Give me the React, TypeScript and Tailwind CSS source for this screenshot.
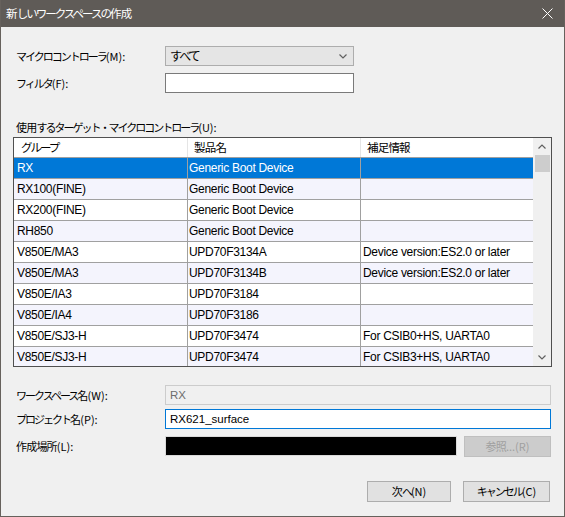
import React from 'react';

const rows = [
  ['RX', 'Generic Boot Device', ''],
  ['RX100(FINE)', 'Generic Boot Device', ''],
  ['RX200(FINE)', 'Generic Boot Device', ''],
  ['RH850', 'Generic Boot Device', ''],
  ['V850E/MA3', 'UPD70F3134A', 'Device version:ES2.0 or later'],
  ['V850E/MA3', 'UPD70F3134B', 'Device version:ES2.0 or later'],
  ['V850E/IA3', 'UPD70F3184', ''],
  ['V850E/IA4', 'UPD70F3186', ''],
  ['V850E/SJ3-H', 'UPD70F3474', 'For CSIB0+HS, UARTA0'],
  ['V850E/SJ3-H', 'UPD70F3474', 'For CSIB3+HS, UARTA0'],
];

// kana packed tight, kanji a little, ascii left alone
const Jp = ({ text }: { text: string }) => {
  const parts = text.match(/[\u4e00-\u9fff]+|[\u3000-\u30ff]+|[^\u3000-\u30ff\u4e00-\u9fff]+/g) ?? [];
  return (
    <span className="whitespace-nowrap">
      {parts.map((p, i) => {
        const kanji = /[\u4e00-\u9fff]/.test(p);
        const kana = /[\u3000-\u30ff]/.test(p);
        return (
          <span
            key={i}
            className={kanji ? 'tracking-[-0.8px]' : kana ? 'tracking-[-2px]' : 'tracking-normal'}
          >
            {p}
          </span>
        );
      })}
    </span>
  );
};

const Chevron = ({ up = false }: { up?: boolean }) => (
  <svg width="8" height="5" viewBox="0 0 8 5" className={up ? 'rotate-180' : ''}>
    <path d="M0.5 0.5 L4 4 L7.5 0.5" fill="none" stroke="#606060" strokeWidth="1.2" />
  </svg>
);

export default function App() {
  return (
    <div className="w-[565px] h-[517px] flex flex-col bg-[#f0f0f0] border-x border-b border-[#66615c] overflow-hidden font-['Noto_Sans_CJK_JP',sans-serif] text-[11px] text-black">
      {/* title bar */}
      <div className="h-[27px] -mx-px bg-[#5f5b57] flex items-center justify-between pl-[6px] pr-[12px] text-white text-[11.5px]">
        <Jp text="新しいワークスペースの作成" />
        <svg width="11" height="11" viewBox="0 0 11 11">
          <path d="M0.5 0.5 L10.5 10.5 M10.5 0.5 L0.5 10.5" stroke="#fff" strokeWidth="1" />
        </svg>
      </div>

      <div className="flex flex-col px-[12px] pt-[19px]">
        <div className="flex items-center h-[20px]">
          <span className="w-[152px] pl-[3px]"><Jp text="マイクロコントローラ(M):" /></span>
          <div className="w-[189px] h-[20px] bg-[#e5e5e5] border border-[#adadad] flex items-center justify-between pl-[4px] pr-[6px] text-[12px]">
            <Jp text="すべて" />
            <Chevron />
          </div>
        </div>

        <div className="flex items-center h-[20px] mt-[7px]">
          <span className="w-[152px] pl-[3px]"><Jp text="フィルタ(F):" /></span>
          <div className="w-[189px] h-[20px] bg-white border border-[#7a7a7a]" />
        </div>

        <div className="mt-[26px] h-[16px] leading-[16px] pl-[3px]">
          <Jp text="使用するターゲット・マイクロコントローラ(U):" />
        </div>

        {/* device list */}
        <div className="mt-[2px] w-[539px] h-[230px] border border-[#505050] bg-white flex overflow-hidden">
          <div className="flex flex-col w-[519px] font-['Liberation_Sans',sans-serif] text-[12px] tracking-[-0.3px]">
            <div className="grid grid-cols-[174px_173px_172px] h-[20px] shrink-0 border-b border-[#a0a0a0] font-['Noto_Sans_CJK_JP',sans-serif] text-[11.5px]">
              <div className="pl-[7px] border-r border-[#e5e5e5] leading-[19px]"><Jp text="グループ" /></div>
              <div className="pl-[6px] border-r border-[#e5e5e5] leading-[19px]"><Jp text="製品名" /></div>
              <div className="pl-[6px] leading-[19px]"><Jp text="補足情報" /></div>
            </div>
            {rows.map((r, i) => (
              <div
                key={i}
                className={
                  'grid grid-cols-[174px_173px_172px] h-[21px] shrink-0 border-b border-[#a0a0a0] leading-[20px] ' +
                  (i === 0 ? 'bg-[#0078d7] text-white' : i % 2 === 1 ? 'bg-[#f4f4fd]' : 'bg-white')
                }
              >
                <div className="pl-[3px] border-r border-[#a0a0a0] whitespace-nowrap">{r[0]}</div>
                <div className="pl-[1px] border-r border-[#a0a0a0] whitespace-nowrap">{r[1]}</div>
                <div className="pl-[2px] whitespace-nowrap">{r[2]}</div>
              </div>
            ))}
          </div>
          <div className="w-[18px] bg-[#f0f0f0] flex flex-col items-center">
            <div className="h-[17px] flex items-center justify-center">
              <Chevron up />
            </div>
            <div className="w-[15px] h-[17px] bg-[#cdcdcd]" />
            <div className="flex-1" />
            <div className="h-[17px] flex items-center justify-center">
              <Chevron />
            </div>
          </div>
        </div>

        <div className="flex items-center h-[20px] mt-[18px]">
          <span className="w-[152px] pl-[3px]"><Jp text="ワークスペース名(W):" /></span>
          <div className="w-[386px] h-[20px] bg-[#f0f0f0] border border-[#cccccc] pl-[4px] leading-[18px] text-[#6d6d6d] font-['Liberation_Sans',sans-serif] text-[11.5px]">
            RX
          </div>
        </div>

        <div className="flex items-center h-[20px] mt-[4px]">
          <span className="w-[152px] pl-[3px]"><Jp text="プロジェクト名(P):" /></span>
          <div className="w-[386px] h-[20px] bg-white border border-[#0078d7] pl-[4px] leading-[18px] font-['Liberation_Sans',sans-serif] text-[11.5px]">
            RX621_surface
          </div>
        </div>

        <div className="flex items-center h-[20px] mt-[7px]">
          <span className="w-[152px] pl-[3px]"><Jp text="作成場所(L):" /></span>
          <div className="w-[292px] h-[20px] bg-black border border-[#d9d9d9]" />
          <div className="ml-[7px] w-[87px] h-[21px] bg-[#cccccc] border border-[#bfbfbf] flex items-center justify-center text-[#a0a0a0]">
            <Jp text="参照...(R)" />
          </div>
        </div>

        <div className="flex justify-end gap-[12px] mt-[25px] pr-[2px]">
          <div className="w-[84px] h-[21px] bg-[#e1e1e1] border border-[#adadad] flex items-center justify-center">
            <Jp text="次へ(N)" />
          </div>
          <div className="w-[87px] h-[21px] bg-[#e1e1e1] border border-[#adadad] flex items-center justify-center">
            <Jp text="キャンセル(C)" />
          </div>
        </div>
      </div>
    </div>
  );
}
